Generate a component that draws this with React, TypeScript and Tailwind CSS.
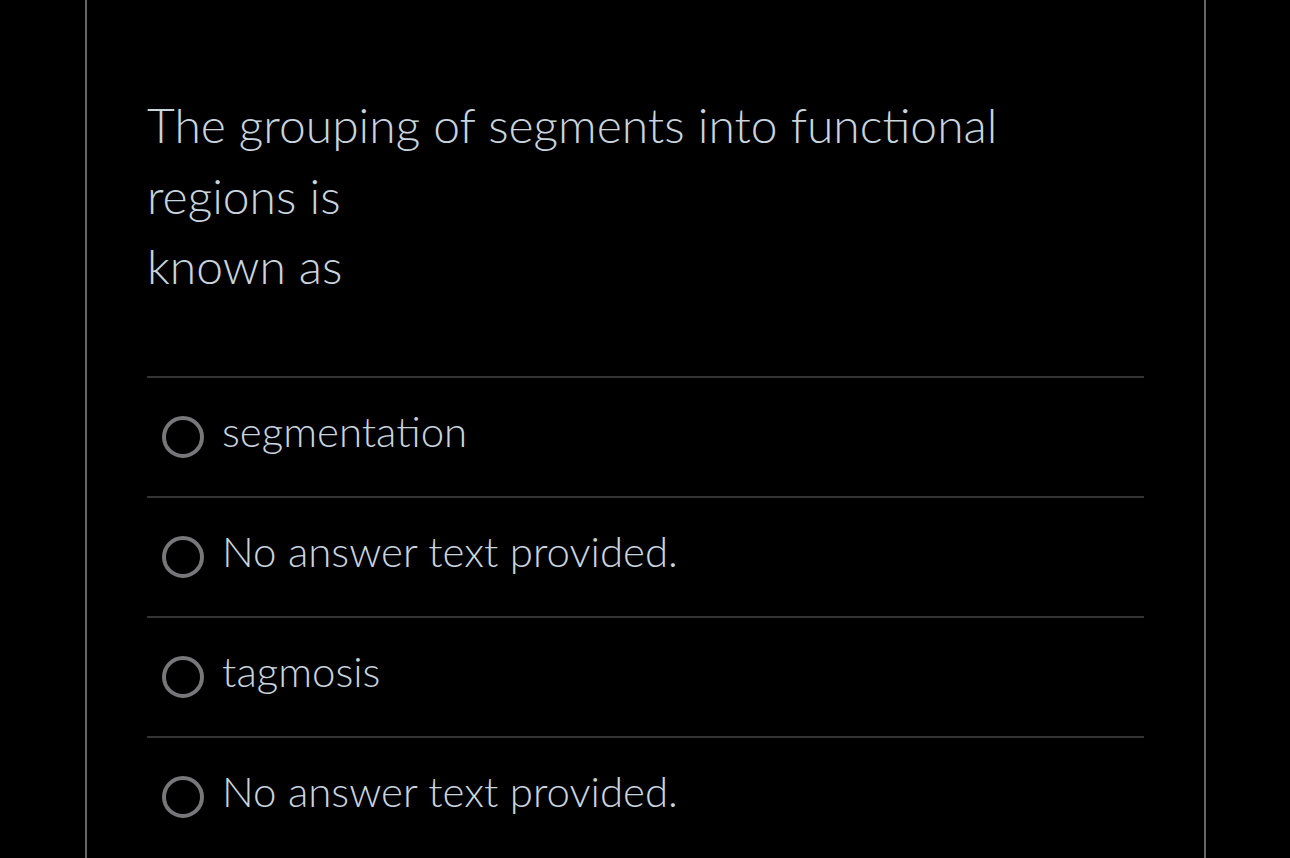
const answers = [
  "segmentation",
  "No answer text provided.",
  "tagmosis",
  "No answer text provided.",
];

const AnswerRow = ({ text }: { text: string }) => {
  return (
    <label className="flex h-[120px] items-center gap-[18px] border-t-2 border-[#333333] pl-[15px]">
      <span className="h-[42px] w-[42px] shrink-0 rounded-full border-4 border-[#77777a]" />
      <span className="pb-[11px] text-[42px] leading-none text-[#c8d4de]">{text}</span>
    </label>
  );
};

export default function App() {
  return (
    <div className="min-h-screen w-full overflow-hidden bg-black font-['Lato',sans-serif] font-light">
      <div className="ml-[85px] min-h-[858px] w-[1121px] border-x-2 border-[#666666] px-[60px] pt-[90px]">
        <h2 className="text-[48px] leading-[70.5px] text-[#c8d4de]">
          The grouping of segments into functional regions is
          <br />
          known as
        </h2>

        <div className="mt-[74px]">
          {answers.map((a, i) => (
            <AnswerRow key={i} text={a} />
          ))}
        </div>
      </div>
    </div>
  );
}
